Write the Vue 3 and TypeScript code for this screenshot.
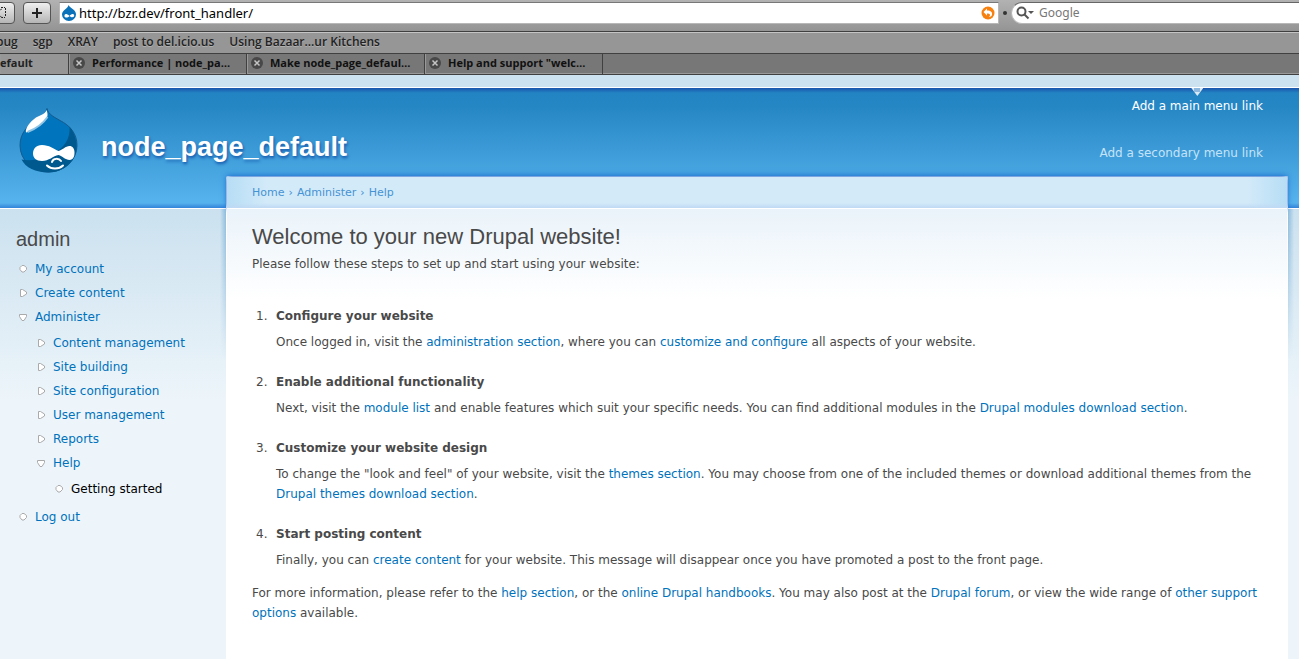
<script setup lang="ts">
interface Part { text: string; link?: boolean }
interface Step { title: string; parts: Part[] }
interface Item { label: string; kind: 'leaf' | 'closed' | 'open'; active?: boolean; children?: Item[] }

const bookmarks: string[] = ['XRAY', 'post to del.icio.us', 'Using Bazaar…ur Kitchens']
const tabs: string[] = ['Performance | node_pa…', 'Make node_page_defaul…', 'Help and support "welc…']

const menu: Item[] = [
  { label: 'My account', kind: 'leaf' },
  { label: 'Create content', kind: 'closed' },
  {
    label: 'Administer', kind: 'open', children: [
      { label: 'Content management', kind: 'closed' },
      { label: 'Site building', kind: 'closed' },
      { label: 'Site configuration', kind: 'closed' },
      { label: 'User management', kind: 'closed' },
      { label: 'Reports', kind: 'closed' },
      { label: 'Help', kind: 'open', children: [{ label: 'Getting started', kind: 'leaf', active: true }] },
    ],
  },
  { label: 'Log out', kind: 'leaf' },
]

const steps: Step[] = [
  { title: 'Configure your website', parts: [
    { text: 'Once logged in, visit the ' }, { text: 'administration section', link: true },
    { text: ', where you can ' }, { text: 'customize and configure', link: true },
    { text: ' all aspects of your website.' } ] },
  { title: 'Enable additional functionality', parts: [
    { text: 'Next, visit the ' }, { text: 'module list', link: true },
    { text: ' and enable features which suit your specific needs. You can find additional modules in the ' },
    { text: 'Drupal modules download section', link: true }, { text: '.' } ] },
  { title: 'Customize your website design', parts: [
    { text: 'To change the "look and feel" of your website, visit the ' }, { text: 'themes section', link: true },
    { text: '. You may choose from one of the included themes or download additional themes from the ' },
    { text: 'Drupal themes download section', link: true }, { text: '.' } ] },
  { title: 'Start posting content', parts: [
    { text: 'Finally, you can ' }, { text: 'create content', link: true },
    { text: ' for your website. This message will disappear once you have promoted a post to the front page.' } ] },
]

const closing: Part[] = [
  { text: 'For more information, please refer to the ' }, { text: 'help section', link: true },
  { text: ', or the ' }, { text: 'online Drupal handbooks', link: true },
  { text: '. You may also post at the ' }, { text: 'Drupal forum', link: true },
  { text: ', or view the wide range of ' }, { text: 'other support options', link: true },
  { text: ' available.' },
]

const markers: Record<Item['kind'], string> = {
  leaf: 'M4 1.500h2l2.500 2v2l-2.500 2.500h-2l-2-2.500v-2z',
  closed: 'M2.500 1.500v7h2l4-2.500v-2l-4-2.500z',
  open: 'M1.500 2.500h7v2l-2.500 4h-2l-2.500-4z',
}
</script>

<template>
  <div class="window">
    <div class="chrome">
      <div class="toolbar">
        <button class="tool clip" type="button" aria-label="Snip">
          <svg width="16" height="16" viewBox="0 0 16 16" fill="none" stroke="#222"><path d="M2 2.500h10M12.500 3v9M2 12.500h10" stroke-dasharray="2 1" /><path d="M9 4 2 7.500l7 5" stroke="#555" /></svg>
        </button>
        <button class="tool" type="button" aria-label="Add bookmark">
          <svg width="12" height="12" viewBox="0 0 12 12" stroke="#222" stroke-width="2"><path d="M1 6h10M6 1v10" /></svg>
        </button>
        <div class="address">
          <svg class="favicon" width="16" height="16" viewBox="0 0 16 16"><path d="M7.500 0C8.500 3 15 4.500 15 9.500A7 6.500 0 0 1 1 9.500C1 5 7 4 7.500 0Z" fill="#0a72b8" /><path d="M8.500 11C5 7.500 3 9 3.500 11.500c1 2 3.500 1 5-.5 1 1 3 2 4.500.5 1-3-2-3.500-4.500-.5" fill="#fff" /></svg>
          <input type="text" value="http://bzr.dev/front_handler/" aria-label="Address">
          <button class="snapback" type="button" aria-label="Snap back">
            <svg width="14" height="14" viewBox="0 0 14 14"><circle cx="7" cy="7" r="6.500" fill="#f7800f" /><path d="M2.500 6 6 2.500v2c4 0 5.500 2 5 4 0 1.500-1.500 2.500-3 2.500 2-2 1-3.500-2-3.500v2z" fill="#fff" /></svg>
          </button>
        </div>
        <span class="grip"></span>
        <div class="search">
          <svg width="19" height="14" viewBox="0 0 19 14" fill="none" stroke="#555" stroke-width="2"><circle cx="5.500" cy="5.500" r="4" /><path d="m8.500 8.500 4 4" /><path d="M12 5h6l-3 3z" fill="#555" stroke="none" /></svg>
          <input type="text" placeholder="Google" aria-label="Search Google">
        </div>
      </div>
      <nav class="bookmarks"><a href="#" class="cut">bug</a><a href="#">sgp</a><a v-for="b in bookmarks" :key="b" href="#">{{ b }}</a></nav>
      <div class="tabs">
        <div class="tab current"><span>efault</span></div>
        <div v-for="t in tabs" :key="t" class="tab">
          <button type="button" aria-label="Close tab"><svg width="12" height="12" viewBox="0 0 12 12"><circle cx="6" cy="6" r="6" fill="#484848" /><path d="m3.500 3.500 5 5m0-5-5 5" stroke="#c4c4c4" stroke-width="1.500" /></svg></button>
          <span>{{ t }}</span>
        </div>
      </div>
    </div>

    <div class="strip"></div>
    <div class="page">
      <header>
        <a class="brand" href="#">
          <svg width="64" height="72" viewBox="0 0 64 72">
            <path d="M31 4.500c1 6 8 9 13 12 10 5 17 13 17 25a28.500 26.500 0 0 1-57 0c0-13 8-20 17-26 6-4 9-6 10-11z" fill="#0074bd" stroke="#165a8c" />
            <path d="M53.500 22.500c1 12-5 21-16 27-11 6-22 8-32 6 4 8 14 13 27 13 15 0 28-11 28-26 0-8-3-15-7-20z" fill="#00598e" />
            <path d="M30.500 6c2 5 1 8-2 11-4 4-10 9-18.500 11.500-1-4 4-11 10-15 4-2.500 9-3 10.500-7.500z" fill="#fff" />
            <path d="M31.500 13c-4 6-12 12-20 15" fill="none" stroke="#8fc3e4" stroke-width="2" />
            <path d="M42.500 47C38 45 33 41 26 41c-6 0-9 4-9 8.500S20 57 26 57c7 0 11-5 16.500-6 4 1 7 5 11 5s5-4 5-7.500c0-4-2-6.500-5-6.500-4 0-7 4-11 5z" fill="#fff" />
            <path d="M36 58c1-4 7-4 9-1M31 61.500c4 4 12 4 16 0" fill="none" stroke="#fff" stroke-width="2" stroke-linecap="round" />
          </svg>
          <h1>node_page_default</h1>
        </a>
        <nav class="links"><a class="primary" href="#">Add a main menu link</a><a class="secondary" href="#">Add a secondary menu link</a></nav>
      </header>
      <div class="columns">
        <aside>
          <h2>admin</h2>
          <ul class="menu">
            <li v-for="a in menu" :key="a.label">
              <svg width="10" height="10" viewBox="0 0 10 10"><path :d="markers[a.kind]" /></svg><a href="#">{{ a.label }}</a>
              <ul v-if="a.children">
                <li v-for="b in a.children" :key="b.label">
                  <svg width="10" height="10" viewBox="0 0 10 10"><path :d="markers[b.kind]" /></svg><a href="#">{{ b.label }}</a>
                  <ul v-if="b.children">
                    <li v-for="c in b.children" :key="c.label">
                      <svg width="10" height="10" viewBox="0 0 10 10"><path :d="markers[c.kind]" /></svg><a href="#" :class="{ active: c.active }">{{ c.label }}</a>
                    </li>
                  </ul>
                </li>
              </ul>
            </li>
          </ul>
        </aside>
        <main>
          <nav class="crumbs"><a href="#">Home</a><span>›</span><a href="#">Administer</a><span>›</span><a href="#">Help</a></nav>
          <article>
            <h2>Welcome to your new Drupal website!</h2>
            <p>Please follow these steps to set up and start using your website:</p>
            <ol>
              <li v-for="s in steps" :key="s.title">
                <strong>{{ s.title }}</strong>
                <p><template v-for="(p, i) in s.parts" :key="i"><a v-if="p.link" href="#">{{ p.text }}</a><template v-else>{{ p.text }}</template></template></p>
              </li>
            </ol>
            <p><template v-for="(p, i) in closing" :key="i"><a v-if="p.link" href="#">{{ p.text }}</a><template v-else>{{ p.text }}</template></template></p>
          </article>
        </main>
      </div>
    </div>
  </div>
</template>

<style>
html, body, #app { height: 100%; }
body { margin: 0; }
</style>

<style scoped>
* { box-sizing: border-box; }
.window { min-height: 100%; display: flex; flex-direction: column; overflow-x: hidden; font: 12px/20px "DejaVu Sans", Verdana, sans-serif; color: #494949; }
a { color: #0072bc; text-decoration: none; }
button { padding: 0; border: 0; background: none; display: grid; place-items: center; }
input { border: 0; outline: 0; padding: 0; background: none; min-width: 0; }
h1, h2, p, ul, ol { margin: 0; padding: 0; }
ul, ol { list-style: none; }

.chrome { font-family: "Open Sans", "Noto Sans", sans-serif; }
.toolbar { height: 32px; display: flex; align-items: flex-start; padding-top: 2px; background: linear-gradient(#b2b2b2, #949494); border-bottom: 1px solid #404040; }
.tool { flex: none; width: 28px; height: 22px; margin-right: 8px; border: 1px solid #555; border-radius: 4px; background: linear-gradient(#efefef, #b5b5b5); }
.clip { margin-left: -13px; }
.address { flex: 1; height: 22px; display: flex; align-items: center; gap: 2px; padding: 0 3px 0 1px; background: #fff; border: 1px solid #b8b8b8; border-top-color: #777; }
.address input { flex: 1; font: 13px/18px "Noto Sans", sans-serif; color: #000; }
.grip { width: 4px; height: 4px; margin: 9px 4px 0; border-radius: 2px; background: #333; }
.search { flex: none; width: 310px; height: 22px; margin-right: -22px; display: flex; align-items: center; gap: 4px; padding-left: 4px; background: #fff; border: 1px solid #b8b8b8; border-top-color: #666; border-radius: 11px; }
.search input { font: 12px/18px "Noto Sans", sans-serif; }
.search input::placeholder { color: #777; opacity: 1; }
.bookmarks { height: 22px; display: flex; gap: 15px; background: #969696; border-top: 1px solid #c4c4c4; border-bottom: 1px solid #404040; font-size: 12px; font-weight: 600; line-height: 18px; }
.bookmarks a { color: #222; text-shadow: 0 1px #b0b0b0; white-space: nowrap; }
.cut { margin-left: -4px; }
.tabs { height: 21px; display: flex; background: #777; border-bottom: 1px solid #404040; box-shadow: inset 0 -1px #999; }
.tab { flex: none; width: 178px; display: flex; align-items: center; gap: 7px; padding-left: 4px; padding-bottom: 2px; border-right: 1px solid #404040; box-shadow: inset 1px -1px #999; font-size: 11px; font-weight: 700; line-height: 18px; color: #111; white-space: nowrap; }
.tab.current { width: 69px; padding-left: 0; background: #969696; color: #222; }

.strip { height: 13px; background: #cce2f1; border-bottom: 1px solid #fff; }
.page { flex: 1; display: flex; flex-direction: column; background: linear-gradient(#cbe1ef, #edf5fa 192px) 0 121px no-repeat, linear-gradient(#1a55ad, #2384c3 5px, #2687c5 20px, #56b2ec 112px, #56b2ec 115px, #3183da 120px, #fff 120px) #edf5fa; }
header { height: 88px; display: flex; justify-content: space-between; padding: 0 36px 0 16px; }
.brand { display: flex; align-items: flex-start; padding-top: 16px; gap: 21px; }
h1 { padding-top: 27px; font: bold 27px/32px "Liberation Sans", Arial, sans-serif; color: #fff; text-shadow: 1px 2px 3px #1659ac; }
.links { display: flex; flex-direction: column; align-items: flex-end; gap: 27px; }
.primary { position: relative; padding-top: 8px; color: #fff; }
.primary::before { content: ""; position: absolute; top: 0; left: 50%; margin-left: -6px; width: 12px; height: 8px; background: linear-gradient(#8fb8de, #8fb8de) 50% 0 / 6px 4px no-repeat #d9eaf6; clip-path: polygon(0 0, 100% 0, 50% 100%); }
.secondary { color: #c5e3f7; }
.columns { flex: 1; display: grid; grid-template-columns: 226px minmax(0, 1fr); padding-right: 11px; }
aside { padding: 50px 16px 0; }
aside h2 { font: 20px/26px "Liberation Sans", Arial, sans-serif; }
.menu { padding-top: 5px; }
.menu li { position: relative; padding: 2px 0 2px 19px; }
.menu li svg { position: absolute; left: 2px; top: 7px; fill: #fff; stroke: #aaa; }
.menu ul { padding: 4px 0 0; margin-left: -1px; }
.active { color: #000; }
main { position: relative; display: flex; flex-direction: column; border: 1px solid #fff; border-bottom: 0; border-radius: 2px 2px 0 0; }
main::before, main::after { content: ""; position: absolute; top: 32px; width: 6px; height: 150px; -webkit-mask-image: linear-gradient(#000, transparent); mask-image: linear-gradient(#000, transparent); }
main::before { right: 100%; margin-right: 1px; background: linear-gradient(90deg, transparent, #8dbbdc); }
main::after { left: 100%; margin-left: 1px; background: linear-gradient(90deg, #8dbbdc, transparent); }
.crumbs { height: 32px; display: flex; gap: 4px; padding: 0 25px; line-height: 31px; font-size: 11px; color: #3f8fd2; border-bottom: 1px solid #fff; background: linear-gradient(transparent 26px, #bfd9f4 31px), linear-gradient(90deg, #b6ddf5, #d3eaf9 40px calc(100% - 40px), #b6ddf5); box-shadow: 0 -1px 6px #1560ca; }
.crumbs a { color: #4693d3; }
article { position: relative; flex: 1; padding: 14px 25px 0; background: linear-gradient(#eaf3fa, #fff 90px); }
article h2 { padding-bottom: 3px; font: 22px/28px "Liberation Sans", Arial, sans-serif; }
article ol { padding: 32px 0 13px 24px; counter-reset: step; }
article li { position: relative; padding-bottom: 20px; counter-increment: step; }
article li::before { content: counter(step) "."; position: absolute; left: -20px; }
article li:last-child { padding: 0; }
article li p { padding-top: 6px; }
</style>
